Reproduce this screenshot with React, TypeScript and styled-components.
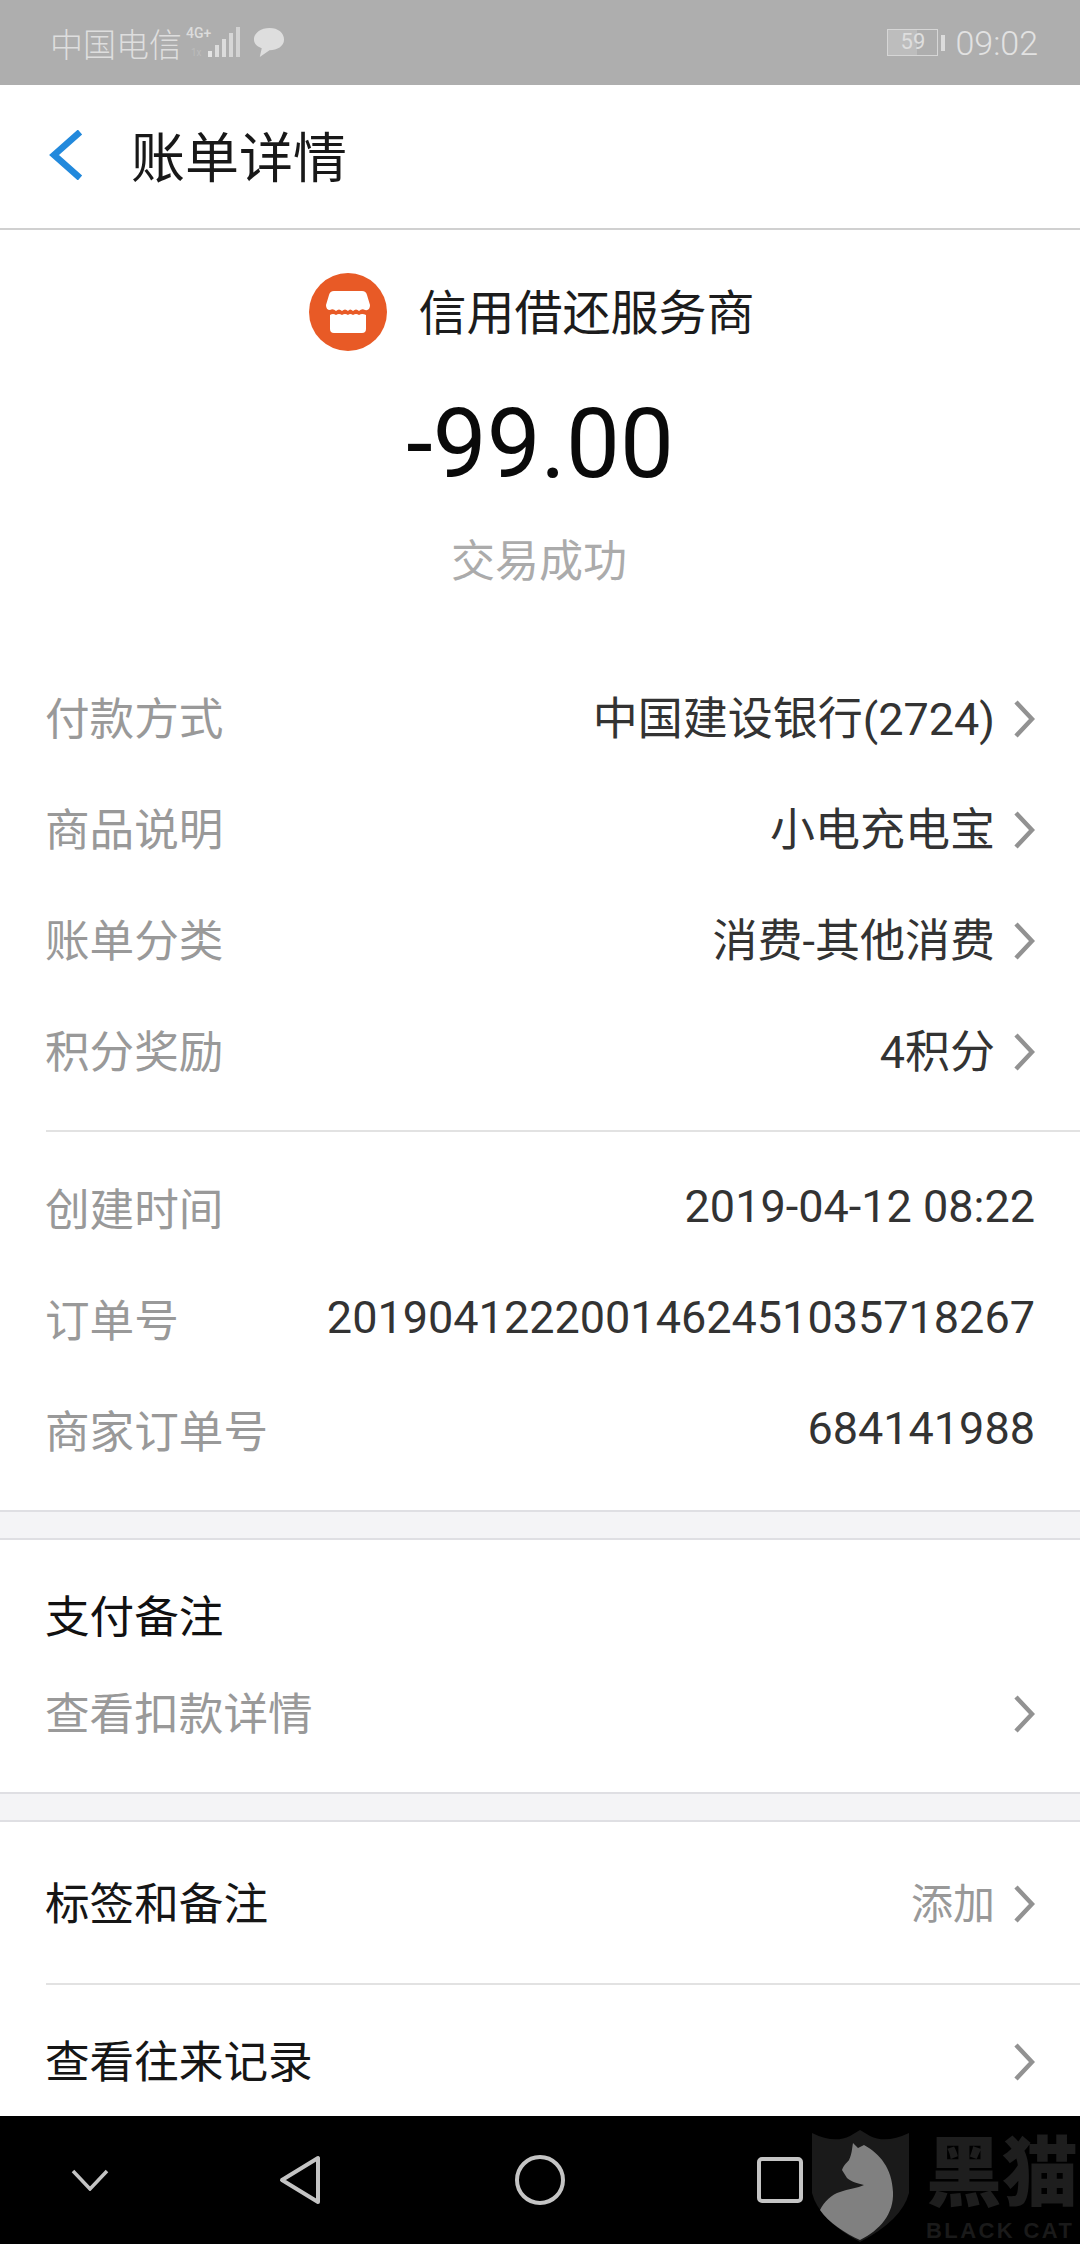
import React from "react";
import styled, {createGlobalStyle} from "styled-components";

const GlobalStyle = createGlobalStyle`
  html, body {
    margin: 0;
    padding: 0;
    background: #fff;
    font-family: Roboto, "Noto Sans CJK SC", sans-serif;
  }
  * { box-sizing: border-box; }
`;

const Screen = styled.div`
  width: 1080px;
  height: 2244px;
  display: flex;
  flex-direction: column;
  overflow: hidden;
  position: relative;
  background: #fff;
`;

const StatusBar = styled.div`
  height: 85px;
  flex: none;
  background: #aeaeae;
  color: #dedede;
  display: flex;
  align-items: center;
  justify-content: space-between;
  padding: 0 42px 0 50px;
`;

const StatusGroup = styled.div`
  display: flex;
  align-items: center;
`;

const Carrier = styled.span`
  font-size: 33px;
  font-weight: 300;
  margin-right: 3px;
`;

const Clock = styled.span`
  font-size: 34px;
  font-weight: 300;
  margin-left: 10px;
  color: #e2e2e2;
`;

const BatteryBody = styled.div`
  width: 51px;
  height: 27px;
  border: 1.5px solid #d6d6d6;
  font-size: 22px;
  line-height: 23px;
  display: flex;
  justify-content: center;
  background: linear-gradient(90deg, #bdbdbd 0 60%, transparent 60%);
`;

const BatteryTip = styled.div`
  width: 4px;
  height: 16px;
  margin-left: 3px;
  background: #dcdcdc;
`;

const Header = styled.div`
  height: 145px;
  flex: none;
  display: flex;
  align-items: center;
  padding: 0 0 4px 49px;
  border-bottom: 2px solid #d0d0d0;
`;

const Title = styled.h1`
  margin: 0 0 0 46px;
  font-size: 54px;
  font-weight: 400;
  color: #181818;
`;

const Summary = styled.div`
  flex: none;
  display: flex;
  flex-direction: column;
  align-items: center;
  padding-top: 43px;
  height: 432px;
`;

const Merchant = styled.div`
  display: flex;
  align-items: center;
  gap: 31px;
  height: 78px;
  margin-right: 16px;
`;

const MerchantName = styled.span`
  font-size: 48px;
  color: #1c1c1c;
  margin-bottom: 6px;
`;

const Amount = styled.div`
  font-size: 96px;
  line-height: 116px;
  margin-top: 35px;
  color: #0a0a0a;
`;

const StatusText = styled.div`
  font-size: 44px;
  line-height: 60px;
  margin-top: 30px;
  margin-right: 2px;
  color: #ababab;
`;

const Rows = styled.div<{$top?: number; $bottom?: number}>`
  flex: none;
  padding: ${p => p.$top ?? 0}px 45px ${p => p.$bottom ?? 0}px 45px;
`;

const Row = styled.div`
  height: 111px;
  padding-bottom: 5px;
  display: flex;
  align-items: center;
  justify-content: space-between;
`;

const Label = styled.span<{$dark?: boolean}>`
  font-size: 44.6px;
  color: ${p => (p.$dark ? "#161616" : "#999")};
`;

const Value = styled.span<{$muted?: boolean}>`
  display: flex;
  align-items: center;
  color: ${p => (p.$muted ? "#999" : "#333")};
  font-size: ${p => (p.$muted ? 42 : 45)}px;
`;

const Divider = styled.div`
  height: 2px;
  background: #e2e2e2;
  margin: 0 0 0 46px;
  flex: none;
`;

const Gap = styled.div`
  height: 30px;
  flex: none;
  background: #f4f4f6;
  border-top: 2px solid #dfdfe3;
  border-bottom: 2px solid #dfdfe3;
`;

const NoteTitle = styled.div`
  font-size: 44.6px;
  color: #111;
  height: 60px;
  line-height: 60px;
  margin-bottom: 9px;
`;

const ChevronIcon = styled.svg`
  margin: 8px 0 0 18px;
  flex: none;
`;

const NavBar = styled.div`
  position: absolute;
  left: 0;
  right: 0;
  bottom: 0;
  height: 128px;
  background: #000;
  display: grid;
  grid-template-columns: 180px 240px 240px 240px 180px;
  align-items: center;
  justify-items: center;
`;

const Watermark = styled.div`
  position: absolute;
  left: 812px;
  top: 2130px;
  width: 268px;
  display: flex;
  align-items: flex-start;
`;

const WatermarkText = styled.div`
  margin-left: 17px;
  padding-top: 10px;
  color: #1e1e1e;
`;

const WatermarkName = styled.div`
  font-size: 76px;
  line-height: 68px;
  font-weight: 900;
  white-space: nowrap;
`;

const WatermarkLatin = styled.div`
  margin-top: 12px;
  font-size: 22px;
  line-height: 22px;
  font-weight: 700;
  letter-spacing: 2.4px;
  white-space: nowrap;
  font-family: "Liberation Sans", sans-serif;
  color: #1a1a1a;
`;

const Chevron = () => (
  <ChevronIcon width="22" height="38" viewBox="0 0 22 38">
    <path d="M3 2 L19 19 L3 36" fill="none" stroke="#929292" strokeWidth="4.5" />
  </ChevronIcon>
);

const LinkRow = ({label, value, dark, muted}: {label: string; value?: string; dark?: boolean; muted?: boolean}) => (
  <Row>
    <Label $dark={dark}>{label}</Label>
    <Value $muted={muted}>{value}<Chevron /></Value>
  </Row>
);

const PlainRow = ({label, value}: {label: string; value: string}) => (
  <Row>
    <Label>{label}</Label>
    <Value>{value}</Value>
  </Row>
);

const StoreIcon = () => (
  <svg width="78" height="78" viewBox="0 0 78 78">
    <circle cx="39" cy="39" r="39" fill="#e85a26" />
    <path d="M25 18 H53 Q57 18 58 22 L61 32 Q61 38 56 37 Q53 35 50 38 Q47 35 44 38 Q41 35 39 38 Q36 35 33 38 Q30 35 27 38 Q24 35 21 37 Q17 37 17 32 L20 22 Q21 18 25 18 Z" fill="#fff" />
    <path d="M21 42 Q24 40 27 42 Q30 40 33 42 Q36 40 39 42 Q41 40 44 42 Q47 40 50 42 Q53 40 57 42 V56 Q57 60 53 60 H25 Q21 60 21 56 Z" fill="#fff" />
  </svg>
);

const Signal = () => (
  <svg width="58" height="36" viewBox="0 0 58 36">
    <text x="1" y="13" fontSize="14" fontFamily="Roboto" fontWeight="500" fill="#dcdcdc">4G+</text>
    <text x="6" y="31" fontSize="10" fontFamily="Roboto" fill="#bcbcbc">1x</text>
    <rect x="23" y="26" width="4" height="6" fill="#e4e4e4" />
    <rect x="30" y="20" width="4" height="12" fill="#dcdcdc" />
    <rect x="37" y="14" width="4" height="18" fill="#dcdcdc" />
    <rect x="44" y="8" width="4" height="24" fill="#d6d6d6" />
    <rect x="51" y="2" width="4" height="30" fill="#d2d2d2" />
  </svg>
);

const Bubble = () => (
  <svg width="33" height="33" viewBox="0 0 34 34" style={{marginLeft: 10}}>
    <path d="M17 2 C26 2 32 7 32 14 C32 21 25 25 17 25 L7 32 L9 23 C4 21 1 18 1 14 C1 7 8 2 17 2 Z" fill="#dedede" />
  </svg>
);

const BackArrow = () => (
  <svg width="36" height="50" viewBox="0 0 36 50">
    <path d="M31 2 L5 25 L31 48" fill="none" stroke="#2289dc" strokeWidth="6.5" />
  </svg>
);

const Cat = () => (
  <svg width="97" height="112" viewBox="0 0 97 112" style={{flex: "none"}}>
    <path d="M0 3 Q22 14 38 6 L48 0 L58 6 Q74 14 97 3 V63 Q90 90 48 112 Q7 90 0 63 Z" fill="#1a1a1a" />
    <path d="M41 13 L46 18 L52 15 C68 24 80 38 81 62 C82 84 68 100 48 110 C34 104 16 92 8 80 C12 72 20 64 28 62 C36 59 46 58 52 55 C44 53 38 51 35 48 L30 40 C32 34 36 32 37 30 C40 24 40 18 41 13 Z" fill="#808080" />
  </svg>
);

const App = () => (
  <Screen>
    <GlobalStyle />
    <StatusBar>
      <StatusGroup>
        <Carrier>中国电信</Carrier>
        <Signal />
        <Bubble />
      </StatusGroup>
      <StatusGroup>
        <BatteryBody>59</BatteryBody>
        <BatteryTip />
        <Clock>09:02</Clock>
      </StatusGroup>
    </StatusBar>
    <Header>
      <BackArrow />
      <Title>账单详情</Title>
    </Header>
    <Summary>
      <Merchant>
        <StoreIcon />
        <MerchantName>信用借还服务商</MerchantName>
      </Merchant>
      <Amount>-99.00</Amount>
      <StatusText>交易成功</StatusText>
    </Summary>
    <Rows $bottom={24}>
      <LinkRow label="付款方式" value="中国建设银行(2724)" />
      <LinkRow label="商品说明" value="小电充电宝" />
      <LinkRow label="账单分类" value="消费-其他消费" />
      <LinkRow label="积分奖励" value="4积分" />
    </Rows>
    <Divider />
    <Rows $top={21} $bottom={24}>
      <PlainRow label="创建时间" value="2019-04-12 08:22" />
      <PlainRow label="订单号" value="2019041222001462451035718267" />
      <PlainRow label="商家订单号" value="684141988" />
    </Rows>
    <Gap />
    <Rows $top={48} $bottom={24}>
      <NoteTitle>支付备注</NoteTitle>
      <LinkRow label="查看扣款详情" />
    </Rows>
    <Gap />
    <Rows $top={25} $bottom={25}>
      <LinkRow label="标签和备注" value="添加" dark muted />
    </Rows>
    <Divider />
    <Rows $top={20}>
      <LinkRow label="查看往来记录" dark />
    </Rows>
    <NavBar>
      <svg width="38" height="22" viewBox="0 0 38 22">
        <path d="M2 2 L19 20 L36 2" fill="none" stroke="#c4c4c4" strokeWidth="3.5" />
      </svg>
      <svg width="42" height="50" viewBox="0 0 42 50">
        <path d="M39 3 V47 L3 25 Z" fill="none" stroke="#c4c4c4" strokeWidth="4" strokeLinejoin="round" />
      </svg>
      <svg width="50" height="50" viewBox="0 0 50 50">
        <circle cx="25" cy="25" r="23" fill="none" stroke="#c4c4c4" strokeWidth="4" />
      </svg>
      <svg width="46" height="46" viewBox="0 0 46 46">
        <rect x="2" y="2" width="42" height="42" rx="3" fill="none" stroke="#c4c4c4" strokeWidth="4" />
      </svg>
    </NavBar>
    <Watermark>
      <Cat />
      <WatermarkText>
        <WatermarkName>黑猫</WatermarkName>
        <WatermarkLatin>BLACK CAT</WatermarkLatin>
      </WatermarkText>
    </Watermark>
  </Screen>
);

export default App;
